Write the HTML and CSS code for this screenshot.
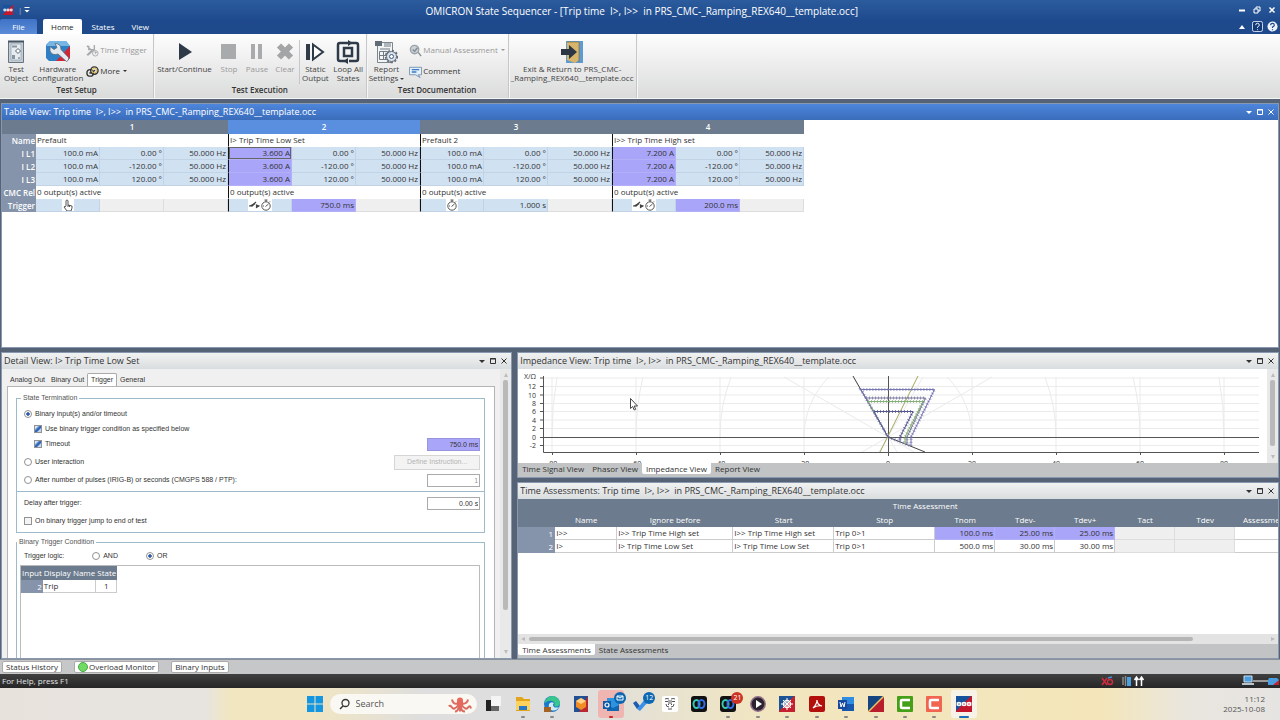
FILE: index.html
```html
<!DOCTYPE html>
<html lang="en">
<head>
    <meta charset="UTF-8">
    <meta name="viewport" content="width=device-width, initial-scale=1.0">
    <title>OMICRON State Sequencer</title>
    <link rel="stylesheet" href="styles.css">
</head>
<body>

    <svg class="defs" aria-hidden="true">
        <symbol id="pane-menu" viewBox="0 0 8 8"><path d="M1 3h6L4 6z" fill="currentColor"/></symbol>
        <symbol id="pane-max" viewBox="0 0 8 8"><path d="M1.5 1.5h5v5h-5zM1 2h6" fill="none" stroke="currentColor"/></symbol>
        <symbol id="pane-close" viewBox="0 0 8 8"><path d="M1.5 1.5l5 5M6.500 1.500l-5 5" fill="none" stroke="currentColor"/></symbol>
        <symbol id="omicron" viewBox="0 0 16 16">
            <path d="M0 0h16v16H0z" fill="#c5172c"/><path d="M0 0h15L0 15z" fill="#17529c"/>
            <path d="M0 6h16v4H0z" fill="#fff" opacity=".25"/>
            <g fill="none" stroke="#fff" stroke-width="1.5"><circle cx="3" cy="8" r="1.600"/><circle cx="8" cy="8" r="1.600"/><circle cx="13" cy="8" r="1.600"/></g>
        </symbol>
        <symbol id="stopwatch" viewBox="0 0 12 12"><g fill="none" stroke="#444" stroke-width=".9"><circle cx="6" cy="7" r="4.200"/><path d="M6 2.800V1M4.500 1h3M9 3.500l1-1M5.500 7.500L8.500 5M3 7h1"/></g></symbol>
        <symbol id="contact" viewBox="0 0 12 12"><path d="M1 7h3l4-4M3.500 7.500l3.500-3M8.500 6L11 7 8.500 8.500z" fill="#444" stroke="#444" stroke-width="1.200"/></symbol>
    </svg>

    <header class="titlebar">
        <div class="title-row">
            <svg class="app-icon"><use href="#omicron"/></svg>
            <span class="quick">|</span>
            <svg class="quick-arrow" viewBox="0 0 8 8"><path d="M1.500 1.500h5" stroke="#fff"/><path d="M1.500 4h5L4 6.500z" fill="#fff"/></svg>
            <h1>OMICRON State Sequencer - [Trip time&nbsp; I&gt;, I&gt;&gt;&nbsp; in PRS_CMC-_Ramping_REX640__template.occ]</h1>
            <div class="window-controls">
                <button aria-label="Minimize"><svg viewBox="0 0 8 8"><path d="M1 4.500h6" stroke="#fff" stroke-width="2"/></svg></button>
                <button aria-label="Restore"><svg viewBox="0 0 8 8"><path d="M1 3h4v4H1zM3 3V1h4v4H5" fill="none" stroke="#fff"/></svg></button>
                <button aria-label="Close"><svg viewBox="0 0 8 8"><path d="M1.500 1.500l5 5M6.500 1.500l-5 5" stroke="#fff" stroke-width="1.500"/></svg></button>
            </div>
        </div>
        <nav class="ribbon-tabs">
            <button class="file">File</button>
            <button class="active">Home</button>
            <button>States</button>
            <button>View</button>
            <div class="window-controls">
                <button aria-label="Collapse ribbon"><svg viewBox="0 0 8 8"><path d="M1 6h6L4 2z" fill="#fff"/></svg></button>
                <button aria-label="Help"><svg class="wide" viewBox="0 0 12 12"><rect x=".5" y=".5" width="11" height="11" rx="2" fill="#123a78" stroke="#dfe8f5"/><path d="M4 4.500q0-2 2-2t2 2q0 1-2 2v1M6 9v1" fill="none" stroke="#fff"/></svg></button>
                <button aria-label="About"><svg class="wide" viewBox="0 0 12 12"><circle cx="6" cy="6" r="5.500" fill="#eef3fa"/><path d="M4 4.500q0-2 2-2t2 2q0 1-2 2v1M6 9v1" fill="none" stroke="#1e4c92" stroke-width="1.300"/></svg></button>
            </div>
        </nav>
    </header>

    <section class="ribbon">
        <div class="group">
            <div class="tools setup">
                <button class="big">
                    <svg viewBox="0 0 24 24"><path d="M4.500 1.500h15v21h-15z" fill="#c3cdd6" stroke="#68747f"/><path d="M7 4h10v16H7z" fill="#e7ecf0" stroke="#94a0ab" stroke-width=".7"/><path d="M8 5.500h5v2H8zM8 15h3v4H8z" fill="#8996a2"/><path d="M14 8.500l2.500 2.500-2.500 2.500-2.500-2.500z" fill="#fff" stroke="#52606c"/><circle cx="15" cy="18" r="1" fill="#8996a2"/><path d="M4 1.500h16" stroke="#465564" stroke-width="2"/></svg>
                    <span>Test<br>Object</span>
                </button>
                <button class="big">
                    <svg viewBox="0 0 24 24"><path d="M4 1h16l4 5v12l-3 3H3l-3-3V5z" fill="#2f7fc4"/><path d="M4 1h16l4 5H0z" fill="#77b5e5"/><path d="M24 6v12l-3 3H10z" fill="#d22634"/><path d="M4 6.500l4 3 3-2-2-4q6 0 6 6l7.500 8q1 3-2 4l-8.500-7.500q-6 2-8-3z" fill="#e3e9ee" stroke="#596b7c" stroke-width=".8"/></svg>
                    <span>Hardware<br>Configuration</span>
                </button>
                <div class="stack">
                    <button disabled>
                        <svg viewBox="0 0 14 14"><path d="M1 2l5 5-5 5M3 2v4h6V1M2 12l7-6" fill="none" stroke="#a8abae" stroke-width="1.500"/><circle cx="10" cy="10" r="3" fill="#eee" stroke="#a8abae"/><path d="M10 8v2l1.500-1" fill="none" stroke="#999"/></svg>
                        <span>Time Trigger</span>
                    </button>
                    <button>
                        <svg viewBox="0 0 14 14"><g fill="none" stroke="#333" stroke-width="1.500"><circle cx="4.500" cy="8.500" r="3.500"/><circle cx="9" cy="6" r="4"/></g><circle cx="9" cy="6" r="2.500" fill="none" stroke="#e0b83a"/><circle cx="4.500" cy="8.500" r="1" fill="#333"/><circle cx="9" cy="6" r="1" fill="#333"/></svg>
                        <span>More</span><i class="caret"></i>
                    </button>
                </div>
            </div>
            <h2>Test Setup</h2>
        </div>

        <div class="group">
            <div class="tools">
                <button class="big start">
                    <svg viewBox="0 0 24 24"><path d="M6 3l13 9L6 20z" fill="#2f3a48"/></svg>
                    <span>Start/Continue</span>
                </button>
                <button class="big small" disabled>
                    <svg viewBox="0 0 24 24"><path d="M4 4h15v15H4z" fill="#a9aaac"/></svg>
                    <span>Stop</span>
                </button>
                <button class="big small" disabled>
                    <svg viewBox="0 0 24 24"><path d="M6 4h4v15H6zM13 4h4v15h-4z" fill="#a9aaac"/></svg>
                    <span>Pause</span>
                </button>
                <button class="big small" disabled>
                    <svg viewBox="0 0 24 24"><path d="M6 5.500l12 12M18 5.500l-12 12" stroke="#a4a5a7" stroke-width="6"/></svg>
                    <span>Clear</span>
                </button>
                <button class="big divided">
                    <svg viewBox="0 0 24 24"><path d="M3 4h4v16H3z" fill="#2f3a48"/><path d="M10 4.500l10 7.500-10 7.500z" fill="#fff" stroke="#2f3a48" stroke-width="2"/></svg>
                    <span>Static<br>Output</span>
                </button>
                <button class="big loop">
                    <svg viewBox="0 0 24 24"><g fill="none" stroke="#2f3a48" stroke-width="2.500"><path d="M9 21H4q-2 0-2-2V5q0-2 2-2h9M15 3h5q2 0 2 2v14q0 2-2 2h-7"/><path d="M8 8h8v8H8z"/></g><path d="M12 0l5 3-5 3zM12 18l-5 3 5 3z" fill="#2f3a48"/></svg>
                    <span>Loop All<br>States</span>
                </button>
            </div>
            <h2>Test Execution</h2>
        </div>

        <div class="group">
            <div class="tools docs">
                <button class="big">
                    <svg viewBox="0 0 24 24"><path d="M3.500 2.500h15v20h-15z" fill="#f2f4f6" stroke="#7d858d"/><path d="M1 1h7v5H1z" fill="#626c77"/><path d="M10 4h7M10 6h7M6 9h10M5.500 11.500h8v8h-8zM5.500 15.500h8M9.500 11.500v8" fill="none" stroke="#727b85"/><circle cx="17.500" cy="16.500" r="5" fill="#dce2e8" stroke="#5e6b78"/><circle cx="17.500" cy="16.500" r="6" fill="none" stroke="#5e6b78" stroke-width="1.500" stroke-dasharray="2 2"/><circle cx="17.500" cy="16.500" r="2" fill="#fff" stroke="#3b5d88"/></svg>
                    <span>Report<br>Settings<i class="caret"></i></span>
                </button>
                <div class="stack">
                    <button disabled>
                        <svg viewBox="0 0 14 14"><circle cx="6" cy="6" r="4.500" fill="#ccd2d7" stroke="#9ba3aa" stroke-width="1.500"/><path d="M4 6l2 2 3-4M10 9l3 4" fill="none" stroke="#858d94" stroke-width="1.500"/></svg>
                        <span>Manual Assessment</span><i class="caret"></i>
                    </button>
                    <button>
                        <svg viewBox="0 0 14 14"><path d="M.5 2.500h13v8H10l2 3-5-3H.5z" fill="#e4f0fb" stroke="#7893b2"/><path d="M3 5h8M3 7.500h5" stroke="#397ac0" stroke-width="1.500"/></svg>
                        <span>Comment</span>
                    </button>
                </div>
            </div>
            <h2>Test Documentation</h2>
        </div>

        <div class="group">
            <div class="tools">
                <button class="big exit">
                    <svg viewBox="0 0 24 24"><path d="M6 1h17v22H6z" fill="#5f9bd0"/><path d="M7 2l12 0v18l-4 3-8-3z" fill="#d9b56c"/><path d="M7 2h12v20" fill="none" stroke="#886b35" stroke-width=".7"/><path d="M1 9h8V5l8 7-8 7v-4H1z" fill="#2c3644"/></svg>
                    <span>Exit &amp; Return to PRS_CMC-<br>_Ramping_REX640__template.occ</span>
                </button>
            </div>
        </div>
    </section>

    <main class="workspace">
        <section class="pane table-view">
            <div class="pane-title selected">
                <h2>Table View: Trip time&nbsp; I&gt;, I&gt;&gt;&nbsp; in PRS_CMC-_Ramping_REX640__template.occ</h2>
                <button aria-label="Menu"><svg><use href="#pane-menu"/></svg></button>
                <button aria-label="Maximize"><svg><use href="#pane-max"/></svg></button>
                <button aria-label="Close"><svg><use href="#pane-close"/></svg></button>
            </div>
            <table class="states">
                <thead>
                    <tr><th class="corner"></th><th colspan="3">1</th><th colspan="3" class="current">2</th><th colspan="3">3</th><th colspan="3">4</th></tr>
                </thead>
                <tbody>
                    <tr class="plain"><th>Name</th><td colspan="3">Prefault</td><td colspan="3" class="first">I&gt; Trip Time Low Set</td><td colspan="3" class="first">Prefault 2</td><td colspan="3" class="first">I&gt;&gt; Trip Time High set</td></tr>
                    <tr><th>I L1</th><td>100.0 mA</td><td>0.00 °</td><td>50.000 Hz</td><td class="first linked focus">3.600 A</td><td>0.00 °</td><td>50.000 Hz</td><td class="first">100.0 mA</td><td>0.00 °</td><td>50.000 Hz</td><td class="first linked">7.200 A</td><td>0.00 °</td><td>50.000 Hz</td></tr>
                    <tr><th>I L2</th><td>100.0 mA</td><td>-120.00 °</td><td>50.000 Hz</td><td class="first linked">3.600 A</td><td>-120.00 °</td><td>50.000 Hz</td><td class="first">100.0 mA</td><td>-120.00 °</td><td>50.000 Hz</td><td class="first linked">7.200 A</td><td>-120.00 °</td><td>50.000 Hz</td></tr>
                    <tr><th>I L3</th><td>100.0 mA</td><td>120.00 °</td><td>50.000 Hz</td><td class="first linked">3.600 A</td><td>120.00 °</td><td>50.000 Hz</td><td class="first">100.0 mA</td><td>120.00 °</td><td>50.000 Hz</td><td class="first linked">7.200 A</td><td>120.00 °</td><td>50.000 Hz</td></tr>
                    <tr class="plain"><th>CMC Rel</th><td colspan="3">0 output(s) active</td><td colspan="3" class="first">0 output(s) active</td><td colspan="3" class="first">0 output(s) active</td><td colspan="3" class="first">0 output(s) active</td></tr>
                    <tr>
                        <th>Trigger</th>
                        <td class="icons"><span><svg viewBox="0 0 12 12"><path d="M4 7V2q0-1 1-1t1 1v4l4 1v2L9 12H5L2 8q1-1.500 2 0M7.500 6v2M6 6v2" fill="#fff" stroke="#444" stroke-width=".9"/></svg></span></td><td class="empty"></td><td class="empty"></td>
                        <td class="first icons"><span><svg><use href="#contact"/></svg><svg><use href="#stopwatch"/></svg></span></td><td class="linked">750.0 ms</td><td class="empty"></td>
                        <td class="first icons"><span><svg><use href="#stopwatch"/></svg></span></td><td>1.000 s</td><td class="empty"></td>
                        <td class="first icons"><span><svg><use href="#contact"/></svg><svg><use href="#stopwatch"/></svg></span></td><td class="linked">200.0 ms</td><td class="empty"></td>
                    </tr>
                </tbody>
            </table>
        </section>

        <section class="pane detail-view">
            <div class="pane-title">
                <h2>Detail View: I&gt; Trip Time Low Set</h2>
                <button aria-label="Menu"><svg><use href="#pane-menu"/></svg></button>
                <button aria-label="Maximize"><svg><use href="#pane-max"/></svg></button>
                <button aria-label="Close"><svg><use href="#pane-close"/></svg></button>
            </div>
            <div class="detail-body">
                <div class="detail-main">
                    <nav class="detail-tabs">
                        <button>Analog Out</button><button>Binary Out</button><button class="active">Trigger</button><button>General</button>
                    </nav>
                    <form class="detail-page">
                        <fieldset>
                            <legend>State Termination</legend>
                            <div class="row"><label><input type="radio" name="term" checked>Binary input(s) and/or timeout</label></div>
                            <div class="row indent short"><label><input type="checkbox" checked>Use binary trigger condition as specified below</label></div>
                            <div class="row indent"><label><input type="checkbox" checked>Timeout</label><input class="value linked" type="text" value="750.0 ms" aria-label="Timeout value"></div>
                            <div class="row"><label><input type="radio" name="term">User interaction</label><button type="button" class="define" disabled>Define Instruction...</button></div>
                            <div class="row"><label><input type="radio" name="term">After number of pulses (IRIG-B) or seconds (CMGPS 588 / PTP):</label><input class="value" type="text" value="1" disabled aria-label="Number of pulses"></div>
                            <hr>
                            <div class="row"><label for="delay">Delay after trigger:</label><input id="delay" class="value" type="text" value="0.00 s"></div>
                            <div class="row"><label><input type="checkbox">On binary trigger jump to end of test</label></div>
                        </fieldset>
                        <fieldset class="condition">
                            <legend>Binary Trigger Condition</legend>
                            <div class="logic"><span>Trigger logic:</span><label><input type="radio" name="logic">AND</label><label><input type="radio" name="logic" checked>OR</label></div>
                            <div class="inputs">
                                <table>
                                    <thead><tr><th>Input</th><th>Display Name</th><th>State</th></tr></thead>
                                    <tbody><tr><th>2</th><td>Trip</td><td class="state">1</td></tr></tbody>
                                </table>
                            </div>
                        </fieldset>
                    </form>
                </div>
                <div class="scroll-y"><i class="up"></i><span></span><i class="down"></i></div>
            </div>
        </section>

        <div class="right">
            <section class="pane">
                <div class="pane-title">
                    <h2>Impedance View: Trip time&nbsp; I&gt;, I&gt;&gt;&nbsp; in PRS_CMC-_Ramping_REX640__template.occ</h2>
                    <button aria-label="Menu"><svg><use href="#pane-menu"/></svg></button>
                    <button aria-label="Maximize"><svg><use href="#pane-max"/></svg></button>
                    <button aria-label="Close"><svg><use href="#pane-close"/></svg></button>
                </div>
                <div class="chart-area">
                    <svg class="chart">
                        <!-- origin of the R/X plane -->
                        <g transform="translate(370 68)">
                            <g class="grid">
                                <path d="M-344 -59H371M-344 -50.500H371M-344 -42H371M-344 -33.500H371M-344 -25.500H371M-344 -17H371M-344 -8.500H371M-344 8.500H371"/>
                                <path d="M-336 -60V15M-252 -60V15M-168 -60V15M-84 -60V15M84 -60V15M168 -60V15M252 -60V15M336 -60V15"/>
                                <path d="M-84 0A84 84 0 0 1 -59 -60M59 -60A84 84 0 0 1 84 0M-168 0A168 168 0 0 1 -157 -60M157 -60A168 168 0 0 1 168 0M-252 0A252 252 0 0 1 -245 -60M245 -60A252 252 0 0 1 252 0M-336 0A336 336 0 0 1 -331 -60M331 -60A336 336 0 0 1 336 0"/>
                                <path d="M-104 -60L26 15M104 -60L-26 15M-35 -60L9 15M35 -60L-9 15"/>
                            </g>
                            <path class="axis" d="M-344.500 -61V15.500H371M-344 .5H371M.5 -61V19"/>
                            <path class="axis" d="M-348 -59H-344M-348 -50.500H-344M-348 -42H-344M-348 -33.500H-344M-348 -25.500H-344M-348 -17H-344M-348 -8.500H-344M-348 .5H-344M-348 8.500H-344M-335.500 15V18M-251.500 15V18M-167.500 15V18M-83.500 15V18M84.500 15V18M168.500 15V18M252.500 15V18M336.500 15V18"/>
                            <path class="olive" d="M30 -61L-8 15"/>
                            <path class="bound" d="M-35 -61L0 0L37 15"/>
                            <g class="zones">
                                <path class="z1" d="M0 0L-27 -47.500H46.500L23 0V9"/>
                                <path class="z2" d="M0 0L-22 -39H37.500L19 0V7.500"/>
                                <path class="z3" d="M0 0L-20 -35.500H35L17 0V7"/>
                                <path class="z4" d="M0 0L-14 -25.500H25L12 0V4"/>
                            </g>
                            <g class="ticks">
                                <path class="z1" d="M0 0L-27 -47.500H46.500L23 0V9L0 0"/>
                                <path class="z2" d="M-22 -39H37.500L19 0V7.500"/>
                                <path class="z3" d="M-20 -35.500H35L17 0V7"/>
                                <path class="z4" d="M-14 -25.500H25L12 0V4"/>
                            </g>
                            <g class="labels" text-anchor="end">
                                <text x="-352" y="-58">X/Ω</text><text x="-352" y="-48">12</text><text x="-352" y="-39">10</text><text x="-352" y="-31">8</text><text x="-352" y="-23">6</text><text x="-352" y="-14">4</text><text x="-352" y="-6">2</text><text x="-352" y="3">0</text><text x="-352" y="11">-2</text>
                            </g>
                            <g class="labels" text-anchor="middle">
                                <text x="-336" y="29">-80</text><text x="-252" y="29">-60</text><text x="-168" y="29">-40</text><text x="-84" y="29">-20</text><text x="0" y="29">0</text><text x="84" y="29">20</text><text x="168" y="29">40</text><text x="252" y="29">60</text><text x="336" y="29">80</text>
                            </g>
                        </g>
                    </svg>
                    <div class="scroll-y chart-scroll"><i class="up"></i><span></span><i class="down"></i></div>
                </div>
                <nav class="bottom-tabs">
                    <button>Time Signal View</button><button>Phasor View</button><button class="active">Impedance View</button><button>Report View</button>
                </nav>
            </section>

            <section class="pane">
                <div class="pane-title">
                    <h2>Time Assessments: Trip time&nbsp; I&gt;, I&gt;&gt;&nbsp; in PRS_CMC-_Ramping_REX640__template.occ</h2>
                    <button aria-label="Menu"><svg><use href="#pane-menu"/></svg></button>
                    <button aria-label="Maximize"><svg><use href="#pane-max"/></svg></button>
                    <button aria-label="Close"><svg><use href="#pane-close"/></svg></button>
                </div>
                <div class="assess-area">
                    <table class="assess">
                        <colgroup><col class="c-num"><col class="c-name"><col class="c-ignore"><col class="c-start"><col class="c-start"><col class="c-val"><col class="c-val"><col class="c-val"><col class="c-val"><col class="c-val"><col class="c-val"></colgroup>
                        <thead>
                            <tr><th></th><th colspan="10">Time Assessment</th></tr>
                            <tr><th></th><th>Name</th><th>Ignore before</th><th>Start</th><th>Stop</th><th>Tnom</th><th>Tdev-</th><th>Tdev+</th><th>Tact</th><th>Tdev</th><th>Assessment</th></tr>
                        </thead>
                        <tbody>
                            <tr><th>1</th><td>I&gt;&gt;</td><td>I&gt;&gt; Trip Time High set</td><td>I&gt;&gt; Trip Time High set</td><td>Trip 0&gt;1</td><td class="num linked">100.0 ms</td><td class="num linked">25.00 ms</td><td class="num linked">25.00 ms</td><td class="empty"></td><td class="empty"></td><td></td></tr>
                            <tr><th>2</th><td>I&gt;</td><td>I&gt; Trip Time Low Set</td><td>I&gt; Trip Time Low Set</td><td>Trip 0&gt;1</td><td class="num">500.0 ms</td><td class="num">30.00 ms</td><td class="num">30.00 ms</td><td class="empty"></td><td class="empty"></td><td></td></tr>
                        </tbody>
                    </table>
                </div>
                <div class="scroll-x"><i class="left"></i><span></span><i class="next"></i></div>
                <nav class="bottom-tabs">
                    <button class="active">Time Assessments</button><button>State Assessments</button>
                </nav>
            </section>
        </div>
    </main>

    <nav class="dock-tabs">
        <button>Status History</button>
        <button><i class="led"></i>Overload Monitor</button>
        <button>Binary Inputs</button>
    </nav>

    <footer class="statusbar">
        <span>For Help, press F1</span>
        <svg class="status-icons" viewBox="0 0 44 12"><path d="M1 3l5 7M6 3L1 10" stroke="#d02b3c" stroke-width="1.500"/><circle cx="9" cy="7" r="2.500" fill="none" stroke="#d02b3c" stroke-width="1.500"/><path d="M7 3l4-1" stroke="#4a8ed0" stroke-width="1.500"/><path d="M22 2v8M24.500 1v10" stroke="#8a8a8a" stroke-width="1.500"/><path d="M26 2h4v9h-4z" fill="#4ba1e0"/><path d="M35.500 11V3M33.500 5l2-3 2 3M40.500 11V3M38.500 5l2-3 2 3" fill="none" stroke="#fff" stroke-width="1.500"/></svg>
        <svg class="connection" viewBox="0 0 38 12"><path d="M3 1h8v6H3z" fill="#4a9ee0" stroke="#c8dff1"/><path d="M1 8h12v2H1z" fill="#b9c3cc"/><path d="M12 6h16" stroke="#fff"/><path d="M28 3h8l2 2v5H27V5z" fill="#4a9ee0"/><path d="M38 5v5h-6z" fill="#c4202f"/></svg>
    </footer>

    <div class="taskbar">
        <div class="task-center">
            <button class="task" aria-label="Start"><svg viewBox="0 0 16 16"><path d="M0 0h7.500v7.500H0zM8.500 0H16v7.500H8.500zM0 8.500h7.500V16H0zM8.500 8.500H16V16H8.500z" fill="#1596e0"/></svg></button>
            <label class="search">
                <svg viewBox="0 0 12 12"><circle cx="6.500" cy="5" r="3.500" fill="none" stroke="#333" stroke-width="1.300"/><path d="M4 8l-3 3" stroke="#333" stroke-width="1.500"/></svg>
                <input type="search" placeholder="Search">
                <svg class="octopus" viewBox="0 0 24 16"><path d="M9 4q0-3 3-3t3 3v4q0 3-3 3t-3-3z" fill="#e8695c"/><path d="M10 9q-4 5-6 2T1 10M11 10q-1 5-4 5M13 10q0 5 4 5M14 9q4 5 6 2t3 1M10 7Q5 8 4 3M14 7q5 1 6-4M12 10v5" fill="none" stroke="#dc6b60" stroke-width="2"/></svg>
            </label>
            <div class="apps">
                <button class="task" aria-label="Task view"><svg viewBox="0 0 16 16"><path d="M6 0h10v10H6z" fill="#f4f4f4"/><path d="M1 4h5v6h8v5H1z" fill="#222"/><path d="M6 10h8v5H6z" fill="#666"/></svg></button>
                <button class="task open" aria-label="Explorer"><svg viewBox="0 0 16 16"><path d="M1 1h6l2 2h6v12H1z" fill="#e3a51b"/><path d="M1 5h14v9H1z" fill="#fbd25b"/><path d="M4 10h8v4H4z" fill="#2478c7"/></svg></button>
                <button class="task open" aria-label="Edge"><svg viewBox="0 0 16 16"><circle cx="8" cy="8" r="8" fill="#1978c9"/><path d="M1 5q3-5 8-5 7 1 7 8-2 4-6 2 2-4-2-5-4-1-7 2z" fill="#38c58e"/><path d="M5 8q2-3 5-1-2 2 0 4 2 1 5 0-3 5-8 3-3-2-2-6z" fill="#cfeaf5"/><path d="M0 11h7v5H0z" fill="#a46325"/></svg></button>
                <button class="task" aria-label="Package"><svg viewBox="0 0 16 16"><path d="M1 0h14v16H1z" fill="#204f94"/><path d="M15 0v16H6z" fill="#b92832"/><path d="M8 2l5 3v6l-5 3-5-3V5z" fill="#f08d24"/><path d="M8 2l5 3-5 3-5-3z" fill="#ffd087"/></svg></button>
                <button class="task open alert" aria-label="Outlook"><svg viewBox="0 0 16 16"><path d="M4 2h12v13H4z" fill="#2c94df"/><path d="M4 9l6 3 6-3v6H4z" fill="#1168b2"/><path d="M0 5h8v8H0z" fill="#0d5ba8"/><circle cx="4" cy="9" r="2" fill="none" stroke="#fff" stroke-width="1.200"/></svg><b class="badge"><svg viewBox="0 0 8 8"><path d="M1 2h6v4H1zM1 2l3 2 3-2" fill="none" stroke="#fff"/></svg></b></button>
                <button class="task" aria-label="To Do"><svg viewBox="0 0 16 16"><path d="M1 7l3-2 4 5-3 3z" fill="#1b5eb0"/><path d="M5 13L13 3l3 3-8 9z" fill="#3b91e8"/></svg><b class="badge">12</b></button>
                <button class="task" aria-label="Faces"><svg viewBox="0 0 16 16"><rect width="16" height="16" rx="2" fill="#fff"/><path d="M3 3q2-1 4 0M9 3q2-1 4 0M3 5.500h3M10 5.500h3M7 4v4l-1 1M9 4v4l1 1M4 8q0 3 3 3M12 8q0 3-3 3M7 12v2M9 12v2" fill="none" stroke="#555"/></svg></button>
                <button class="task" aria-label="Webex"><svg viewBox="0 0 16 16"><rect width="16" height="16" rx="3" fill="#111"/><ellipse cx="5.500" cy="8" rx="3" ry="4" fill="none" stroke="#38c9b0" stroke-width="2"/><ellipse cx="10.500" cy="8" rx="3" ry="4" fill="none" stroke="#346ee8" stroke-width="2"/></svg></button>
                <button class="task open" aria-label="Webex calls"><svg viewBox="0 0 16 16"><rect width="16" height="16" rx="3" fill="#111"/><ellipse cx="5.500" cy="8" rx="3" ry="4" fill="none" stroke="#38c9b0" stroke-width="2"/><ellipse cx="10.500" cy="8" rx="3" ry="4" fill="none" stroke="#346ee8" stroke-width="2"/></svg><b class="badge red">21</b></button>
                <button class="task open" aria-label="Player"><svg viewBox="0 0 16 16"><circle cx="8" cy="8" r="7.200" fill="#2b2430" stroke="#8f6f86" stroke-width="1.500"/><path d="M6 4l6 4-6 4z" fill="#fff"/></svg></button>
                <button class="task open" aria-label="Control center"><svg viewBox="0 0 16 16"><path d="M0 0h16v16H0z" fill="#c4202f"/><path d="M0 0h15L0 15z" fill="#1c5296"/><g fill="none" stroke="#fff"><circle cx="8" cy="8" r="3.500" stroke-width="1.500"/><path d="M8 2v12M2 8h12M4 4l8 8M12 4l-8 8"/></g></svg></button>
                <button class="task open" aria-label="Acrobat"><svg viewBox="0 0 16 16"><rect width="16" height="16" rx="2" fill="#b3100d"/><path d="M4 12q4-4 4-8 0 5 5 6-5-1-9 2z" fill="none" stroke="#fff" stroke-width="1.200"/></svg></button>
                <button class="task open" aria-label="Word"><svg viewBox="0 0 16 16"><path d="M4 1h12v14H4z" fill="#2f8ce0"/><path d="M4 8h12v7H4z" fill="#1756ad"/><path d="M0 4h9v9H0z" fill="#174a9c"/><path d="M2 6l1 5 1.500-4L6 11l1-5" fill="none" stroke="#fff"/></svg></button>
                <button class="task open" aria-label="Test Universe"><svg viewBox="0 0 16 16"><path d="M0 0h16v16H0z" fill="#b91e2c"/><path d="M0 0h16L0 16z" fill="#17457f"/><path d="M16 0L0 16" stroke="#e8c767" stroke-width="1.500"/></svg></button>
                <button class="task open" aria-label="Camtasia"><svg viewBox="0 0 16 16"><rect width="16" height="16" rx="1" fill="#45a017"/><path d="M13 4H5q-1 0-1 1v6q0 1 1 1h8" fill="none" stroke="#fff" stroke-width="2.500"/></svg></button>
                <button class="task open" aria-label="Recorder"><svg viewBox="0 0 16 16"><rect width="16" height="16" rx="1" fill="#f06450"/><path d="M13 4H5q-1 0-1 1v6q0 1 1 1h8" fill="none" stroke="#fff" stroke-width="2.500"/></svg></button>
                <button class="task open current" aria-label="State Sequencer"><svg><use href="#omicron"/></svg></button>
            </div>
        </div>
        <div class="clock"><span>11:12</span><span>2025-10-08</span></div>
    </div>

    <svg class="pointer" viewBox="0 0 8 13"><path d="M.5 .5v10l2.200-2 1.500 3.500 1.500-.7L4.200 8H7.500z" fill="#fff" stroke="#333" stroke-width=".9"/></svg>

</body>
</html>
```
FILE: styles.css
```css
* {
    box-sizing: border-box;
}
body {
    margin: 0;
    height: 100vh;
    display: flex;
    flex-direction: column;
    overflow: hidden;
    background-color: #566275;
    color: #333;
    font-family: "Open Sans", "Noto Sans", sans-serif;
    font-size: 8px;
    line-height: 10px;
}
button, input {
    font: inherit;
    color: inherit;
}
button {
    margin: 0;
    padding: 0;
    border: 0;
    background: none;
    white-space: nowrap;
}
h1, h2 {
    margin: 0;
    font-weight: 400;
}
svg {
    display: block;
    flex: none;
}
.defs {
    position: absolute;
    width: 0;
    height: 0;
}

/* title bar and ribbon tabs */
.titlebar {
    background: linear-gradient(#2c5c9d, #1e4a8d 60%, #1e4a8b);
    color: #fff;
}
.title-row {
    display: flex;
    align-items: center;
    height: 19px;
    padding: 0 2px;
}
.app-icon {
    width: 12px;
    height: 10px;
}
.quick {
    margin-left: 4px;
    opacity: .5;
}
.quick-arrow {
    width: 8px;
    height: 8px;
    margin-left: 1px;
}
h1 {
    flex: 1;
    padding-top: 2px;
    padding-left: 16px;
    font-size: 10px;
    line-height: 14px;
    text-align: center;
}
.window-controls {
    display: flex;
    gap: 3px;
    margin-left: auto;
}
.window-controls button {
    width: 12px;
    display: grid;
    place-items: center;
}
.window-controls svg {
    width: 8px;
    height: 8px;
}
.window-controls .wide {
    width: 11px;
    height: 11px;
}
.ribbon-tabs {
    display: flex;
    height: 15px;
    padding-right: 2px;
    gap: 3px;
}
.ribbon-tabs > button {
    padding: 0 7px;
}
.ribbon-tabs .file {
    width: 37px;
    margin-right: 3px;
    border-radius: 2px 2px 0 0;
    background: linear-gradient(#3f73c6, #5b8bd8);
}
.ribbon-tabs > .active {
    padding: 0 8px;
    background: #fff;
    color: #222;
    border-radius: 2px 2px 0 0;
}

/* ribbon */
.ribbon {
    display: flex;
    height: 65px;
    background: linear-gradient(#fdfdfd, #ececec 50%, #dadbdb);
    border-bottom: 1px solid #f4f4f4;
}
.group {
    display: flex;
    flex-direction: column;
    padding-bottom: 2px;
    border-right: 1px solid #c6c7c8;
    box-shadow: 1px 0 #f6f6f6;
}
.group h2 {
    margin-top: auto;
    text-align: center;
    font-size: 8px;
    font-weight: 600;
    line-height: 12px;
}
.tools {
    display: flex;
    padding-top: 6px;
    height: 50px;
}
.setup {
    width: 153px;
}
.docs {
    width: 141px;
}
.big {
    display: flex;
    flex-direction: column;
    align-items: center;
    padding: 0 2px;
    line-height: 9px;
    color: #444;
}
.big svg {
    width: 24px;
    height: 24px;
}
.setup .big {
    padding: 0 2px 0 4px;
}
.setup .big + .big {
    padding: 0 0 0 2px;
}
.start {
    width: 61px;
}
.small {
    width: 28px;
}
.divided {
    border-left: 1px solid #c6c7c8;
}
.loop {
    width: 35px;
}
.exit {
    width: 127px;
}
button:disabled {
    color: #999;
}
.stack {
    display: flex;
    flex-direction: column;
    gap: 7px;
    padding-top: 3px;
    padding-left: 3px;
}
.stack button {
    display: flex;
    align-items: center;
    gap: 1px;
    height: 14px;
}
.stack svg {
    width: 13px;
    height: 13px;
}
.caret {
    display: inline-block;
    margin-left: 2px;
    vertical-align: middle;
    border: 2px solid transparent;
    border-top-color: currentColor;
    border-bottom: 0;
}

/* docked panes */
.workspace {
    flex: 1;
    min-height: 0;
    display: grid;
    grid-template-columns: 40% 1fr;
    grid-template-rows: 4fr 5fr;
    gap: 4px 5px;
    padding: 4px 1px 0;
}
.pane {
    display: flex;
    flex-direction: column;
    min-width: 0;
    min-height: 0;
    overflow: hidden;
    background: #fff;
    border: 1px solid #8898ae;
}
.table-view {
    grid-column: 1 / -1;
}
.right {
    display: grid;
    grid-template-columns: 100%;
    grid-template-rows: 5fr 7fr;
    gap: 4px;
    min-height: 0;
}
.pane-title {
    display: flex;
    align-items: center;
    flex: none;
    height: 16px;
    padding-left: 2px;
    background: linear-gradient(#f1f2f2, #dadddf);
}
.pane-title.selected {
    background: linear-gradient(#4d86dc, #3a6cba);
    color: #fff;
}
.pane-title h2 {
    flex: 1;
    font-size: 9px;
    line-height: 14px;
    white-space: nowrap;
}
.pane-title button {
    width: 11px;
}
.pane-title svg {
    width: 8px;
    height: 8px;
}

/* tables */
table {
    border-collapse: separate;
    border-spacing: 0;
    table-layout: fixed;
}
th, td {
    padding: 0 2px;
    overflow: hidden;
    white-space: nowrap;
    font-weight: 400;
}
th {
    background-color: #6c7b8d;
    color: #fff;
}
.states {
    width: 802px;
}
.states th, .states td {
    height: 13px;
    line-height: 12px;
}
.states thead th {
    height: 14px;
    font-weight: 600;
}
.states .corner {
    width: 34px;
}
.states .current {
    background-color: #5a8fdf;
}
.states tbody th {
    padding: 0 1px;
    background-color: #8594aa;
    text-align: right;
    font-weight: 600;
}
.states td {
    padding: 0 1px;
    text-align: right;
    background-color: #d0e1f2;
    border-right: 1px solid #c2d3e6;
    border-bottom: 1px solid #c2d3e6;
}
.states .plain td {
    text-align: left;
    background-color: #fff;
    border-color: #fff;
}
.states .first, .states .plain .first {
    border-left: 1px solid #111;
}
.states .linked, .assess .linked {
    background-color: #a9a5f8;
    border-color: #b3b0f8;
}
.states .first.linked {
    border-left-color: #111;
}
.states .focus {
    box-shadow: inset 0 0 0 1px #666;
}
.states .empty, .assess .empty {
    background-color: #efefef;
    border-color: #ddd;
}
.icons span {
    display: flex;
    justify-content: center;
}
.icons svg {
    width: 12px;
    height: 12px;
    background: #fff;
}

/* detail view */
.detail-body {
    flex: 1;
    display: flex;
    min-height: 0;
    background: #f0f0f0;
    font-family: "Liberation Sans", Arial, sans-serif;
    font-size: 7px;
}
.detail-main {
    flex: 1;
    display: flex;
    flex-direction: column;
    min-height: 0;
    padding: 4px 5px 0;
}
.detail-tabs {
    display: flex;
    align-items: flex-end;
}
.detail-tabs button {
    padding: 0 3px;
    height: 12px;
}
.detail-tabs .active {
    height: 13px;
    background: #fff;
    border: 1px solid #aaa;
    border-bottom: 0;
    border-radius: 2px 2px 0 0;
}
.detail-page {
    flex: 1;
    min-height: 0;
    display: flex;
    flex-direction: column;
    padding: 6px 9px 0 8px;
    background: #fff;
    border: 1px solid #b5b5b5;
    border-bottom: 0;
}
fieldset {
    min-width: 0;
    margin: 0 0 4px;
    padding: 2px 4px 2px 7px;
    border: 1px solid #9dbccb;
}
legend {
    margin-left: -3px;
    padding: 0 2px;
    color: #555;
}
.row {
    display: flex;
    align-items: center;
    justify-content: space-between;
    height: 18px;
}
.row.short {
    height: 12px;
}
.indent {
    padding-left: 10px;
}
label {
    display: flex;
    align-items: center;
    gap: 3px;
}
input[type="radio"], input[type="checkbox"] {
    appearance: none;
    width: 8px;
    height: 8px;
    margin: 0;
    border: 1px solid #929292;
    background: #f4f4f4;
}
input[type="radio"] {
    border-radius: 50%;
    background: #fff;
}
input[type="radio"]:checked {
    background: radial-gradient(#2f5aa5 35%, #fff 45%);
}
input[type="checkbox"]:checked {
    background: linear-gradient(135deg, #dce8f8 20%, #2f66ba 45%, #2f66ba 60%, #c3d7f2 75%);
}
.value {
    width: 53px;
    height: 13px;
    padding: 0 1px;
    text-align: right;
    border: 1px solid #aaa;
    background: #fff;
}
.value.linked {
    background: #a9a5f8;
    border-color: #9995dc;
}
.value:disabled {
    color: #999;
}
.define {
    width: 86px;
    height: 15px;
    border: 1px solid #d5d5d5;
    background: #f3f3f3;
}
.define:disabled {
    color: #b5b5b5;
}
fieldset hr {
    margin: 2px -4px 2px -7px;
    border: 0;
    border-top: 1px solid #9dbccb;
}
.condition {
    flex: 1;
    display: flex;
    flex-direction: column;
    min-height: 0;
    margin: 0;
    padding: 0 4px 0 3px;
    border-bottom: 0;
}
.logic {
    display: flex;
    gap: 28px;
    height: 18px;
    padding-left: 4px;
    align-items: center;
}
.inputs {
    flex: 1;
    border: 1px solid #bbb;
    border-bottom: 0;
    font-family: "Open Sans", "Noto Sans", sans-serif;
    font-size: 8px;
}
.inputs th, .inputs td {
    height: 13px;
    padding: 0 1px;
}
.inputs thead th {
    height: 14px;
}
.inputs tbody th {
    background: #8594aa;
    text-align: right;
}
.inputs td {
    border-right: 1px solid #ccc;
    border-bottom: 1px solid #ccc;
}
.inputs .state {
    text-align: center;
}

/* scrollbars */
.scroll-y {
    display: flex;
    flex-direction: column;
    align-items: center;
    width: 11px;
    padding: 4px 0;
    gap: 3px;
    background: #e9e9e9;
}
.scroll-y span {
    width: 5px;
    height: 82%;
    border-radius: 2px;
    background: #b9b9b9;
}
.chart-scroll span {
    height: 76%;
}
.scroll-y i, .scroll-x i {
    border: 2px solid transparent;
}
.scroll-y .up {
    border-top: 0;
    border-bottom: 4px solid #bbb;
}
.scroll-y .down {
    margin-top: auto;
    border-bottom: 0;
    border-top: 4px solid #bbb;
}
.scroll-x {
    display: flex;
    align-items: center;
    gap: 4px;
    height: 10px;
    padding: 0 3px;
    background: #e3e3e3;
}
.scroll-x span {
    width: 88%;
    height: 4px;
    border-radius: 2px;
    background: #b5b5b5;
}
.scroll-x .left {
    border-left: 0;
    border-right: 4px solid #bbb;
}
.scroll-x .next {
    margin-left: auto;
    border-right: 0;
    border-left: 4px solid #bbb;
}

/* impedance chart */
.chart-area {
    flex: 1;
    display: flex;
    min-height: 0;
}
.chart {
    flex: 1;
    width: 100%;
    min-width: 0;
    height: 100%;
    fill: none;
}
.grid {
    stroke: #ebebeb;
    stroke-width: 1;
}
.axis {
    stroke: #555;
}
.olive {
    stroke: #a3a65b;
}
.bound {
    stroke: #444;
}
.ticks {
    stroke-width: 3;
    stroke-dasharray: 1 2;
    opacity: .7;
}
.z1 {
    stroke: #7676b4;
}
.z2 {
    stroke: #77779e;
}
.z3 {
    stroke: #84b077;
}
.z4 {
    stroke: #55558f;
}
.labels {
    fill: #333;
    font-size: 7px;
    stroke: none;
}

/* tabs under panes */
.bottom-tabs {
    display: flex;
    align-items: flex-start;
    flex: none;
    height: 14px;
    background: #c1c3c4;
}
.bottom-tabs button {
    height: 11px;
    padding: 0 4px;
}
.bottom-tabs .active {
    background: #fff;
    border-radius: 0 0 2px 2px;
}

/* time assessments */
.assess-area {
    flex: 1;
    min-height: 0;
    overflow: hidden;
}
.assess {
    width: 777px;
}
.c-num {
    width: 37px;
}
.c-name {
    width: 62px;
}
.c-val {
    width: 60px;
}
.c-ignore {
    width: 116px;
}
.c-start {
    width: 101px;
}
.assess th {
    height: 14px;
}
.assess tbody th {
    background: #8594aa;
    text-align: right;
}
.assess tbody th, .assess td {
    height: 13px;
    line-height: 12px;
}
.assess td {
    padding: 0 1px;
    border-right: 1px solid #ccc;
    border-bottom: 1px solid #ccc;
}
.assess .num {
    text-align: right;
}

/* bottom docking strip and status bar */
.dock-tabs {
    display: flex;
    gap: 12px;
    height: 15px;
    padding: 1px 2px;
    background: #c6c7c8;
    border-top: 1px solid #8a919b;
}
.dock-tabs button {
    display: flex;
    align-items: center;
    gap: 1px;
    padding: 0 3px;
    border: 1px solid #aaa;
    border-radius: 2px;
    background: #fff;
}
.led {
    width: 10px;
    height: 10px;
    border-radius: 50%;
    border: 1px solid #4aa84a;
    background: #6fdb62;
}
.statusbar {
    display: flex;
    align-items: center;
    height: 14px;
    padding: 0 1px 0 2px;
    background: linear-gradient(#404040, #262626);
    color: #e4e4e4;
}
.status-icons {
    width: 44px;
    height: 12px;
    margin-left: auto;
    margin-right: 96px;
}
.connection {
    width: 38px;
    height: 12px;
}

/* taskbar */
.taskbar {
    display: grid;
    grid-template-columns: 1fr auto 1fr;
    align-items: center;
    height: 32px;
    background: linear-gradient(90deg, #e7e2dc, #e7e4df 16%, #f2e6c0 18%, #f2e6c0 24%, #dedede 33%, #dedede 45%, #f2e6c0 60%, #f4e6ba 86%, #e9e6df 93%, #e6e4e2);
}
.task-center {
    grid-column: 2;
    display: flex;
    align-items: center;
    gap: 2px;
}
.task {
    position: relative;
    display: grid;
    place-items: center;
    width: 26px;
    height: 28px;
    margin: 0 auto;
    border-radius: 3px;
}
.task > svg {
    width: 16px;
    height: 16px;
}
.search {
    width: 147px;
    height: 20px;
    padding: 0 5px 0 9px;
    gap: 5px;
    border-radius: 10px;
    background: #faf8f3;
}
.search svg {
    width: 12px;
    height: 12px;
}
.search .octopus {
    width: 24px;
    height: 17px;
}
.search input {
    flex: 1;
    min-width: 0;
    padding: 0;
    border: 0;
    background: none;
    font-size: 9px;
}
.search input::placeholder {
    color: #555;
}
.apps {
    display: grid;
    grid-template-columns: repeat(17, 1fr);
    width: 500px;
}
.open::after {
    content: "";
    position: absolute;
    bottom: 0;
    left: 11px;
    width: 4px;
    height: 2px;
    border-radius: 1px;
    background: #888;
}
.alert {
    background: #f1b5b1;
}
.alert::after {
    background: #c22;
}
.current.task {
    background: #f8f3e8;
}
.task.current::after {
    left: 8px;
    width: 10px;
    background: #1870b8;
}
.badge {
    position: absolute;
    top: 2px;
    right: -2px;
    display: grid;
    place-items: center;
    width: 12px;
    height: 12px;
    border-radius: 50%;
    background: #0d67b1;
    color: #fff;
    font-size: 7px;
    font-weight: 400;
}
.badge svg {
    width: 8px;
    height: 8px;
}
.badge.red {
    background: #cc3322;
}
.clock {
    display: flex;
    flex-direction: column;
    align-items: flex-end;
    padding-right: 15px;
    color: #555;
}

/* mouse pointer */
.pointer {
    position: absolute;
    left: 630px;
    top: 398px;
    width: 8px;
    height: 13px;
}
```
